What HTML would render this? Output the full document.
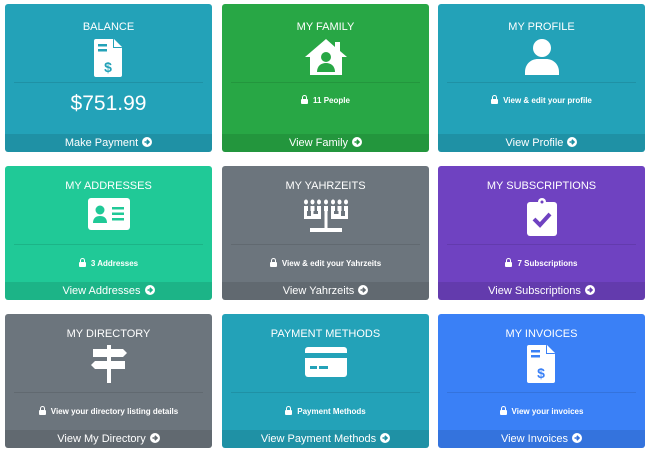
<!DOCTYPE html>
<html><head><meta charset="utf-8"><style>
*{margin:0;padding:0;box-sizing:border-box}
body{width:650px;height:452px;background:#fff;font-family:"Liberation Sans",sans-serif;position:relative;overflow:hidden}
.c{position:absolute;width:207px;border-radius:3px;color:#fff;text-align:center;overflow:hidden}
.t{position:absolute;left:0;right:0;font-size:11px;letter-spacing:0}
.ic{position:absolute;left:0;right:0;display:flex;justify-content:center}
.dv{position:absolute;left:9px;right:9px;height:1px;background:rgba(0,0,0,0.1)}
.s{position:absolute;left:0;right:0;font-size:8px;font-weight:bold}
.f{position:absolute;left:0;right:0;bottom:0;height:18px;background:rgba(0,0,0,0.1);font-size:11px;line-height:18px}
.f svg{vertical-align:-1px;margin-left:4px}
.lk{display:inline-block;width:7px;height:5px;background:#fff;border-radius:1px;margin-right:5px;position:relative;vertical-align:-1px}
.lk:before{content:"";position:absolute;left:1px;top:-4px;width:3px;height:4px;border:1.5px solid #fff;border-bottom:none;border-radius:3px 3px 0 0}
.r1{top:4px;height:148px}.r2{top:166px;height:134px}.r3{top:314px;height:134px}
.x1{left:5px}.x2{left:222px}.x3{left:438px}
.r1 .t{top:17px}.r1 .ic{top:35px}.r1 .dv{top:78px}.r1 .s{top:92px}
.r2 .t{top:14px}.r2 .ic{top:32px}.r2 .dv{top:78px}.r2 .s{top:93px}
.r3 .t{top:14px}.r3 .ic{top:31px}.r3 .dv{top:78px}.r3 .s{top:93px}
</style></head><body>

<div class="c r1 x1" style="background:#23a2b8">
<div class="t">BALANCE</div>
<div class="ic"><svg width="30" height="38" viewBox="0 0 30 38"><path d="M2 0h17l9 9v27a2 2 0 0 1-2 2H2a2 2 0 0 1-2-2V2a2 2 0 0 1 2-2z" fill="#fff"/><path d="M19 0v9h9" fill="#23a2b8"/><path d="M20 0l8 8h-8z" fill="#fff"/><rect x="4" y="5" width="9" height="2.5" fill="#23a2b8"/><rect x="4" y="10" width="9" height="2.5" fill="#23a2b8"/><text x="14" y="33" font-size="14" font-weight="bold" text-anchor="middle" fill="#23a2b8" font-family="Liberation Sans">$</text></svg></div>
<div class="dv"></div>
<div class="s" style="font-size:21px;font-weight:normal;top:88px">$751.99</div>
<div class="f">Make Payment<svg width="10" height="10" viewBox="0 0 10 10"><circle cx="5" cy="5" r="5" fill="#fff"/><path d="M2.5 5h4M4.8 2.8L7 5 4.8 7.2" stroke="#1e8fa2" stroke-width="1.6" fill="none"/></svg></div>
</div>

<div class="c r1 x2" style="background:#28a745">
<div class="t">MY FAMILY</div>
<div class="ic"><svg width="42" height="36" viewBox="0 0 42 36"><path d="M21 0L0 18h5v18h32V18h5L35 12V3h-5v5z" fill="#fff"/><circle cx="21" cy="18" r="5" fill="#28a745"/><path d="M12 33c0-6 4-9 9-9s9 3 9 9z" fill="#28a745"/></svg></div>
<div class="dv"></div>
<div class="s"><span class="lk"></span>11 People</div>
<div class="f">View Family<svg width="10" height="10" viewBox="0 0 10 10"><circle cx="5" cy="5" r="5" fill="#fff"/><path d="M2.5 5h4M4.8 2.8L7 5 4.8 7.2" stroke="#24963e" stroke-width="1.6" fill="none"/></svg></div>
</div>

<div class="c r1 x3" style="background:#23a2b8">
<div class="t">MY PROFILE</div>
<div class="ic"><svg width="34" height="36" viewBox="0 0 34 36"><circle cx="17" cy="9" r="9" fill="#fff"/><path d="M0 33c0-8 6-13 13-13h8c7 0 13 5 13 13v3H0z" fill="#fff"/></svg></div>
<div class="dv"></div>
<div class="s"><span class="lk"></span>View &amp; edit your profile</div>
<div class="f">View Profile<svg width="10" height="10" viewBox="0 0 10 10"><circle cx="5" cy="5" r="5" fill="#fff"/><path d="M2.5 5h4M4.8 2.8L7 5 4.8 7.2" stroke="#1e8fa2" stroke-width="1.6" fill="none"/></svg></div>
</div>

<div class="c r2 x1" style="background:#20c997">
<div class="t">MY ADDRESSES</div>
<div class="ic"><svg width="42" height="32" viewBox="0 0 42 32"><rect width="42" height="32" rx="3" fill="#fff"/><circle cx="12" cy="12" r="4.5" fill="#20c997"/><path d="M5 25c0-5 3-7 7-7s7 2 7 7z" fill="#20c997"/><rect x="24" y="9" width="12" height="2.5" fill="#20c997"/><rect x="24" y="14.5" width="12" height="2.5" fill="#20c997"/><rect x="24" y="20" width="12" height="2.5" fill="#20c997"/></svg></div>
<div class="dv"></div>
<div class="s"><span class="lk"></span>3 Addresses</div>
<div class="f">View Addresses<svg width="10" height="10" viewBox="0 0 10 10"><circle cx="5" cy="5" r="5" fill="#fff"/><path d="M2.5 5h4M4.8 2.8L7 5 4.8 7.2" stroke="#1cb386" stroke-width="1.6" fill="none"/></svg></div>
</div>

<div class="c r2 x2" style="background:#6c757d">
<div class="t">MY YAHRZEITS</div>
<div class="ic"><svg width="50" height="36" viewBox="0 0 50 36"><g fill="#fff"><ellipse cx="5" cy="4" rx="2" ry="2.5"/><ellipse cx="11.5" cy="4" rx="2" ry="2.5"/><ellipse cx="18" cy="4" rx="2" ry="2.5"/><ellipse cx="25" cy="4" rx="2" ry="2.5"/><ellipse cx="32" cy="4" rx="2" ry="2.5"/><ellipse cx="38.5" cy="4" rx="2" ry="2.5"/><ellipse cx="45" cy="4" rx="2" ry="2.5"/><rect x="3" y="8" width="4" height="5"/><rect x="9.5" y="8" width="4" height="5"/><rect x="16" y="8" width="4" height="5"/><rect x="23" y="8" width="4" height="5"/><rect x="30" y="8" width="4" height="5"/><rect x="36.5" y="8" width="4" height="5"/><rect x="43" y="8" width="4" height="5"/><path d="M3 13h3v5h11v-5h3v8H3z"/><path d="M30 13h3v5h11v-5h3v8H30z"/><path d="M10 13h2.5v3h5v-3H20v5H10z"/><path d="M30 13h2.5v3h5v-3H40v5H30z" transform="translate(0,0)"/><rect x="23.5" y="13" width="3" height="18"/><rect x="9" y="30" width="32" height="4"/></g></svg></div>
<div class="dv"></div>
<div class="s"><span class="lk"></span>View &amp; edit your Yahrzeits</div>
<div class="f">View Yahrzeits<svg width="10" height="10" viewBox="0 0 10 10"><circle cx="5" cy="5" r="5" fill="#fff"/><path d="M2.5 5h4M4.8 2.8L7 5 4.8 7.2" stroke="#61696f" stroke-width="1.6" fill="none"/></svg></div>
</div>

<div class="c r2 x3" style="background:#6f42c1">
<div class="t">MY SUBSCRIPTIONS</div>
<div class="ic"><svg width="30" height="38" viewBox="0 0 30 38"><rect x="0" y="4" width="30" height="34" rx="3" fill="#fff"/><circle cx="15" cy="4" r="4" fill="#fff"/><circle cx="15" cy="4" r="1.5" fill="#6f42c1"/><path d="M7 21l6 6 10-11" stroke="#6f42c1" stroke-width="4" fill="none"/></svg></div>
<div class="dv"></div>
<div class="s"><span class="lk"></span>7 Subscriptions</div>
<div class="f">View Subscriptions<svg width="10" height="10" viewBox="0 0 10 10"><circle cx="5" cy="5" r="5" fill="#fff"/><path d="M2.5 5h4M4.8 2.8L7 5 4.8 7.2" stroke="#643bad" stroke-width="1.6" fill="none"/></svg></div>
</div>

<div class="c r3 x1" style="background:#6c757d">
<div class="t">MY DIRECTORY</div>
<div class="ic"><svg width="38" height="38" viewBox="0 0 38 38"><g fill="#fff"><rect x="17" y="0" width="4" height="38"/><path d="M3 4h30l4 4-4 4H3z"/><path d="M5 16h30v8H5l-4-4z"/></g></svg></div>
<div class="dv"></div>
<div class="s"><span class="lk"></span>View your directory listing details</div>
<div class="f">View My Directory<svg width="10" height="10" viewBox="0 0 10 10"><circle cx="5" cy="5" r="5" fill="#fff"/><path d="M2.5 5h4M4.8 2.8L7 5 4.8 7.2" stroke="#61696f" stroke-width="1.6" fill="none"/></svg></div>
</div>

<div class="c r3 x2" style="background:#23a2b8">
<div class="t">PAYMENT METHODS</div>
<div class="ic"><svg width="42" height="34" viewBox="0 0 42 34"><path d="M3 2h36a3 3 0 0 1 3 3v3H0V5a3 3 0 0 1 3-3z" fill="#fff"/><path d="M0 13h42v16a3 3 0 0 1-3 3H3a3 3 0 0 1-3-3z" fill="#fff"/><rect x="5" y="21" width="7" height="3" fill="#23a2b8"/><rect x="14" y="21" width="9" height="3" fill="#23a2b8"/></svg></div>
<div class="dv"></div>
<div class="s"><span class="lk"></span>Payment Methods</div>
<div class="f">View Payment Methods<svg width="10" height="10" viewBox="0 0 10 10"><circle cx="5" cy="5" r="5" fill="#fff"/><path d="M2.5 5h4M4.8 2.8L7 5 4.8 7.2" stroke="#1e8fa2" stroke-width="1.6" fill="none"/></svg></div>
</div>

<div class="c r3 x3" style="background:#3a80f6">
<div class="t">MY INVOICES</div>
<div class="ic"><svg width="30" height="38" viewBox="0 0 30 38"><path d="M2 0h17l9 9v27a2 2 0 0 1-2 2H2a2 2 0 0 1-2-2V2a2 2 0 0 1 2-2z" fill="#fff"/><path d="M19 0v9h9" fill="#3a80f6"/><path d="M20 0l8 8h-8z" fill="#fff"/><rect x="4" y="5" width="9" height="2.5" fill="#3a80f6"/><rect x="4" y="10" width="9" height="2.5" fill="#3a80f6"/><text x="14" y="33" font-size="14" font-weight="bold" text-anchor="middle" fill="#3a80f6" font-family="Liberation Sans">$</text></svg></div>
<div class="dv"></div>
<div class="s"><span class="lk"></span>View your invoices</div>
<div class="f">View Invoices<svg width="10" height="10" viewBox="0 0 10 10"><circle cx="5" cy="5" r="5" fill="#fff"/><path d="M2.5 5h4M4.8 2.8L7 5 4.8 7.2" stroke="#3371dd" stroke-width="1.6" fill="none"/></svg></div>
</div>

</body></html>
